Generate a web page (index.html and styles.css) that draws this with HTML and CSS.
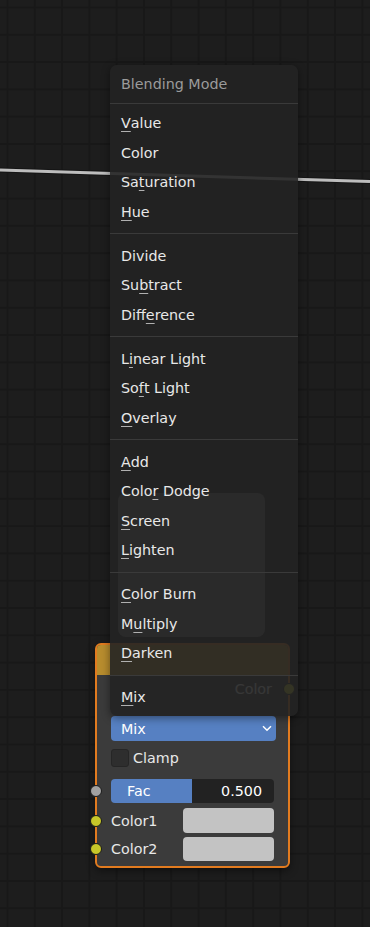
FILE: index.html
```html
<!DOCTYPE html>
<html lang="en">
<head>
    <meta charset="UTF-8">
    <meta name="viewport" content="width=device-width, initial-scale=1.0">
    <title>Node Editor - Blending Mode</title>
    <link rel="stylesheet" href="styles.css">
</head>
<body>
    <div class="editor">
        <!-- link running behind the menu -->
        <svg class="wires" width="370" height="927" viewBox="0 0 370 927">
            <path class="wire-edge" d="M0 170 L370 181.5"/>
            <path class="wire" d="M0 170 L370 181.5"/>
        </svg>

        <div class="node ghost"></div>

        <div class="node mix">
            <div class="node-header"></div>
            <div class="output">
                <span>Color</span>
                <span class="socket yellow"></span>
            </div>
            <div class="node-body">
                <div class="dropdown">
                    <span>Mix</span>
                    <svg class="chevron" width="10" height="7" viewBox="0 0 10 7">
                        <polyline points="1,1.2 5,5.2 9,1.2"/>
                    </svg>
                </div>
                <div class="check-row">
                    <span class="checkbox"></span>
                    <span>Clamp</span>
                </div>
                <div class="slider" style="--fac: 49.4%">
                    <span class="socket grey"></span>
                    <span class="slider-label">Fac</span>
                    <span class="slider-value">0.500</span>
                </div>
                <div class="color-row">
                    <span class="socket yellow"></span>
                    <span>Color1</span>
                    <span class="swatch"></span>
                </div>
                <div class="color-row second">
                    <span class="socket yellow"></span>
                    <span>Color2</span>
                    <span class="swatch"></span>
                </div>
            </div>
        </div>

        <div class="menu">
            <div class="menu-title">Blending Mode</div>
            <div class="menu-item"><span class="key">V</span>alue</div>
            <div class="menu-item">Color</div>
            <div class="menu-item">Sa<span class="key">t</span>uration</div>
            <div class="menu-item"><span class="key">H</span>ue</div>
            <div class="menu-sep"></div>
            <div class="menu-item">Divide</div>
            <div class="menu-item">Su<span class="key">b</span>tract</div>
            <div class="menu-item">Diff<span class="key">e</span>rence</div>
            <div class="menu-sep"></div>
            <div class="menu-item">L<span class="key">i</span>near Light</div>
            <div class="menu-item">So<span class="key">f</span>t Light</div>
            <div class="menu-item"><span class="key">O</span>verlay</div>
            <div class="menu-sep"></div>
            <div class="menu-item"><span class="key">A</span>dd</div>
            <div class="menu-item">Colo<span class="key">r</span> Dodge</div>
            <div class="menu-item"><span class="key">S</span>creen</div>
            <div class="menu-item"><span class="key">L</span>ighten</div>
            <div class="menu-sep"></div>
            <div class="menu-item"><span class="key">C</span>olor Burn</div>
            <div class="menu-item">M<span class="key">u</span>ltiply</div>
            <div class="menu-item"><span class="key">D</span>arken</div>
            <div class="menu-sep"></div>
            <div class="menu-item"><span class="key">M</span>ix</div>
        </div>
    </div>
</body>
</html>
```

FILE: styles.css
```css
body {
    margin: 0;
    padding: 0;
    font-family: "DejaVu Sans", "Noto Sans", sans-serif;
    font-size: 14.3px;
    color: #e8e8e8;
    background-color: #1d1d1d;
    overflow: hidden;
}

/* node editor canvas with grid */
.editor {
    position: relative;
    width: 370px;
    height: 927px;
    background-color: #1d1d1d;
    background-image:
        linear-gradient(to right, #181818 2px, transparent 2px),
        linear-gradient(to bottom, #181818 2px, transparent 2px);
    background-size: 27.3px 27.3px;
    background-position: 6.5px 6.5px;
}

.wires {
    position: absolute;
    left: 0;
    top: 0;
}

.wire-edge {
    stroke: #151515;
    stroke-width: 5;
    fill: none;
}

.wire {
    stroke: #bdbdbd;
    stroke-width: 3;
    fill: none;
}

/* nodes */
.node {
    position: absolute;
    box-sizing: border-box;
}

.ghost {
    left: 118px;
    top: 493px;
    width: 147px;
    height: 144px;
    background-color: #6a6a6a;
    border-radius: 8px;
}

.mix {
    left: 95px;
    top: 643px;
    width: 195px;
    background-color: #3b3b3b;
    border: 2px solid #e27b1f;
    border-radius: 6px;
    box-shadow: 0 3px 8px rgba(0, 0, 0, 0.45);
}

.node-header {
    height: 30px;
    background-color: #b88d2e;
    border-radius: 4px 4px 0 0;
}

.output {
    position: relative;
    height: 28px;
    display: flex;
    align-items: center;
    justify-content: flex-end;
    padding-right: 16px;
}

.output .socket {
    left: auto;
    right: -7px;
}

.node-body {
    padding: 13px 12px 5px 14px;
}

.socket {
    position: absolute;
    left: -21px;
    top: 50%;
    width: 10px;
    height: 10px;
    margin-top: -6px;
    border: 1px solid #1a1a1a;
    border-radius: 50%;
}

.socket.yellow {
    background-color: #c7c729;
}

.socket.grey {
    background-color: #a1a1a1;
}

.dropdown {
    height: 25px;
    display: flex;
    align-items: center;
    justify-content: space-between;
    padding: 0 4px 0 10px;
    background-color: #5680c2;
    color: #fff;
    border-radius: 4px;
}

.chevron polyline {
    fill: none;
    stroke: #fff;
    stroke-width: 1.5;
}

.check-row {
    height: 18px;
    margin-top: 8px;
    display: flex;
    align-items: center;
    gap: 4px;
}

.checkbox {
    width: 18px;
    height: 18px;
    box-sizing: border-box;
    background-color: #2e2e2e;
    border: 1px solid #262626;
    border-radius: 3px;
}

.slider {
    position: relative;
    height: 24px;
    margin: 12px 2px 0 0;
    display: flex;
    align-items: center;
    justify-content: space-between;
    padding: 0 12px 0 16px;
    border-radius: 4px;
    background: linear-gradient(to right, #5680c2 var(--fac), #222 var(--fac));
    color: #fff;
}

.color-row {
    position: relative;
    height: 25px;
    margin: 5px 2px 0 0;
    display: flex;
    align-items: center;
    justify-content: space-between;
}

.color-row.second {
    height: 24px;
    margin-top: 4px;
}

.swatch {
    width: 91px;
    height: 100%;
    background-color: #c3c3c3;
    border-radius: 4px;
}

/* popup menu */
.menu {
    position: absolute;
    left: 110px;
    top: 65px;
    width: 188px;
    padding-bottom: 4px;
    background-color: rgba(35, 35, 35, 0.9);
    border-radius: 7px;
    box-shadow: 0 2px 8px rgba(0, 0, 0, 0.45);
}

.menu-title {
    height: 38px;
    display: flex;
    align-items: center;
    padding: 0 11px;
    margin-bottom: 4.2px;
    border-bottom: 1px solid #3a3a3a;
    color: #9b9b9b;
}

.menu-item {
    height: 29.55px;
    display: flex;
    align-items: center;
    padding: 0 11px;
    white-space: pre;
}

.menu-sep {
    height: 14.45px;
    display: flex;
    align-items: center;
}

.menu-sep::before {
    content: "";
    flex: 1;
    height: 1px;
    background-color: #3a3a3a;
}

.key {
    text-decoration: underline;
    text-decoration-thickness: 1px;
    text-underline-offset: 3px;
    text-decoration-color: #b0b0b0;
}
```
